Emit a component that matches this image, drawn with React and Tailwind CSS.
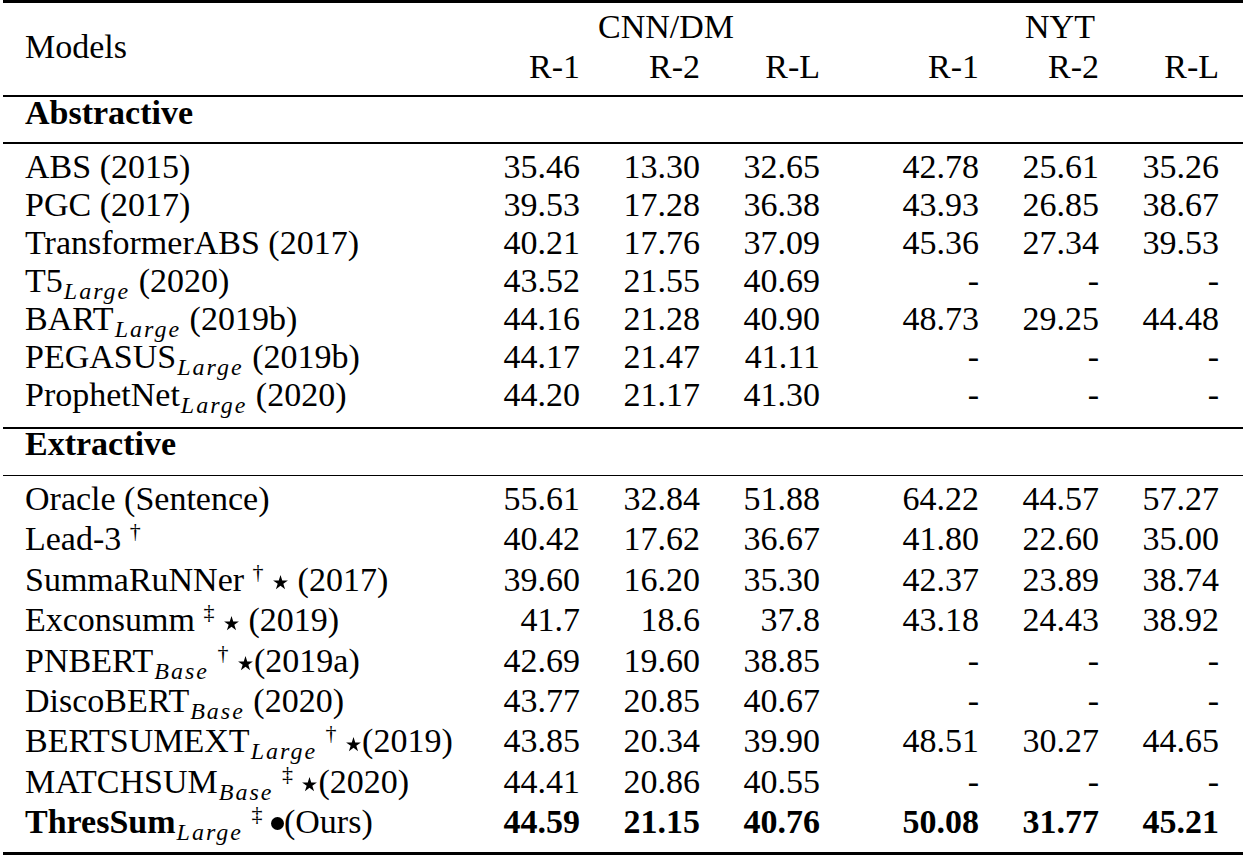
const cols = 'grid grid-cols-[477px_100px_120px_120px_159px_120px_120px] pr-[24px]';

const Sub = ({ children }) => (
  <span className="relative top-[7px] ml-[1px] text-[24px] italic tracking-[2px] leading-none">{children}</span>
);

const Sup = ({ children }) => (
  <span className="relative -top-[12px] text-[22px] leading-none">{children}</span>
);

const Star = () => (
  <svg viewBox="0 0 24 24" className="inline-block w-[17px] h-[17px]">
    <path d="M12 1.5L14.47 9.1L22.46 9.1L15.99 13.8L18.47 21.4L12 16.7L5.53 21.4L8.01 13.8L1.54 9.1L9.53 9.1Z" fill="black" />
  </svg>
);

const Dot = () => <span className="inline-block w-[13px] h-[13px] rounded-full bg-black relative -top-[3px]" />;

const abstractive = [
  [<>ABS (2015)</>, ['35.46', '13.30', '32.65', '42.78', '25.61', '35.26']],
  [<>PGC (2017)</>, ['39.53', '17.28', '36.38', '43.93', '26.85', '38.67']],
  [<>TransformerABS (2017)</>, ['40.21', '17.76', '37.09', '45.36', '27.34', '39.53']],
  [<>T5<Sub>Large</Sub> (2020)</>, ['43.52', '21.55', '40.69', '-', '-', '-']],
  [<>BART<Sub>Large</Sub> (2019b)</>, ['44.16', '21.28', '40.90', '48.73', '29.25', '44.48']],
  [<>PEGASUS<Sub>Large</Sub> (2019b)</>, ['44.17', '21.47', '41.11', '-', '-', '-']],
  [<>ProphetNet<Sub>Large</Sub> (2020)</>, ['44.20', '21.17', '41.30', '-', '-', '-']],
];

const extractive = [
  [<>Oracle (Sentence)</>, ['55.61', '32.84', '51.88', '64.22', '44.57', '57.27']],
  [<>Lead-3 <Sup>†</Sup></>, ['40.42', '17.62', '36.67', '41.80', '22.60', '35.00']],
  [<>SummaRuNNer <Sup>†</Sup> <Star /> (2017)</>, ['39.60', '16.20', '35.30', '42.37', '23.89', '38.74']],
  [<>Exconsumm <Sup>‡</Sup> <Star /> (2019)</>, ['41.7', '18.6', '37.8', '43.18', '24.43', '38.92']],
  [<>PNBERT<Sub>Base</Sub> <Sup>†</Sup> <Star />(2019a)</>, ['42.69', '19.60', '38.85', '-', '-', '-']],
  [<>DiscoBERT<Sub>Base</Sub> (2020)</>, ['43.77', '20.85', '40.67', '-', '-', '-']],
  [<>BERTSUMEXT<Sub>Large</Sub> <Sup>†</Sup> <Star />(2019)</>, ['43.85', '20.34', '39.90', '48.51', '30.27', '44.65']],
  [<>MATCHSUM<Sub>Base</Sub> <Sup>‡</Sup> <Star />(2020)</>, ['44.41', '20.86', '40.55', '-', '-', '-']],
  [<><b>ThresSum</b><Sub>Large</Sub> <Sup>‡</Sup> <Dot />(Ours)</>, ['44.59', '21.15', '40.76', '50.08', '31.77', '45.21'], true],
];

function Row({ label, vals, bold, h }) {
  return (
    <div className={`${cols} ${h}`}>
      <div className="pl-[22px] whitespace-nowrap">{label}</div>
      {vals.map((v, i) => (
        <div key={i} className={bold ? 'text-right font-bold' : 'text-right'}>{v}</div>
      ))}
    </div>
  );
}

export default function App() {
  return (
    <div className="w-[1246px] h-[856px] overflow-hidden bg-white text-black font-['Liberation_Serif',serif] text-[34px]">
      <div className="ml-[3px] w-[1240px]">
        <div className="h-[3px] bg-black" />

        <div className={`${cols} grid-rows-[40px_40px] leading-[40px] pt-[4px] pb-[8px]`}>
          <div className="row-span-2 self-center pl-[22px]">Models</div>
          <div className="col-span-3 pl-[32px] text-center">CNN/DM</div>
          <div className="col-span-3 pl-[81px] text-center">NYT</div>
          <div className="text-right">R-1</div>
          <div className="text-right">R-2</div>
          <div className="text-right">R-L</div>
          <div className="text-right">R-1</div>
          <div className="text-right">R-2</div>
          <div className="text-right">R-L</div>
        </div>

        <div className="h-[2px] bg-black" />
        <div className="h-[45px] leading-[30px] pt-[1px] pl-[22px] font-bold">Abstractive</div>
        <div className="h-[1.5px] bg-black" />

        <div className="pt-[4px] pb-[13px]">
          {abstractive.map(([label, vals], i) => (
            <Row key={i} label={label} vals={vals} h="h-[38px] leading-[38px]" />
          ))}
        </div>

        <div className="h-[2px] bg-black" />
        <div className="h-[46px] leading-[30px] pl-[22px] font-bold">Extractive</div>
        <div className="h-[1.5px] bg-black" />

        <div className="pt-[3px] pb-[9px]">
          {extractive.map(([label, vals, bold], i) => (
            <Row key={i} label={label} vals={vals} bold={bold} h="h-[40.4px] leading-[40.4px]" />
          ))}
        </div>

        <div className="h-[3px] bg-black" />
      </div>
    </div>
  );
}
